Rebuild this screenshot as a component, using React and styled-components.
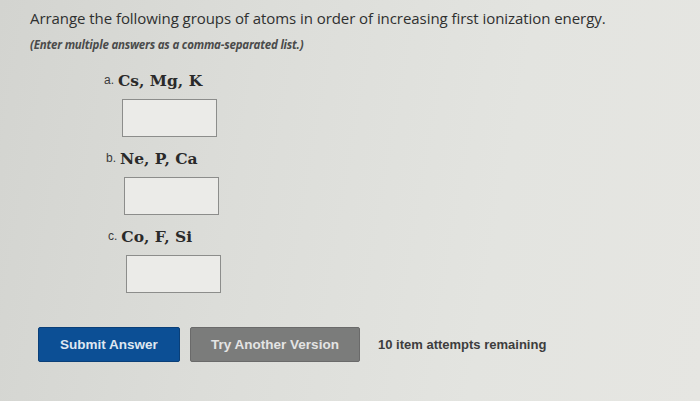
import styled, { createGlobalStyle } from "styled-components";

const Global = createGlobalStyle`
html, body {
  margin: 0;
  padding: 0;
}
body {
  width: 700px;
  height: 401px;
  overflow: hidden;
  background: linear-gradient(100deg, #d3d4d0 0%, #dcddd9 35%, #e3e4e0 70%, #e6e6e2 100%);
}
`;

const Container = styled.div`
width: 700px;
height: 401px;
box-sizing: border-box;
padding: 9px 0 0 30px;
display: flex;
flex-direction: column;
font-family: "Open Sans", "Liberation Sans", sans-serif;
`;

const Prompt = styled.p`
margin: 0;
font-size: 15px;
line-height: 18px;
color: #2f3030;
letter-spacing: -0.06px;
`;

const Note = styled.p`
margin: 10px 0 0 0;
font-size: 11.5px;
line-height: 16px;
font-weight: 700;
font-style: italic;
color: #4a4b4b;
letter-spacing: -0.2px;
`;

const Items = styled.div`
margin: 17px 0 0 74px;
display: flex;
flex-direction: column;
gap: 11px;
`;

const Item = styled.div`
display: flex;
flex-direction: column;
gap: 9px;
padding-left: ${props => props.shift}px;
`;

const Label = styled.div`
height: 20px;
display: flex;
align-items: center;
gap: 4px;
color: #2a2a2a;
`;

const Letter = styled.span`
font-family: "Liberation Sans", sans-serif;
font-size: 12px;
color: #3a3a3a;
`;

const Elements = styled.span`
font-family: "DejaVu Serif", "Liberation Serif", serif;
font-size: 15.5px;
font-weight: 700;
`;

const AnswerBox = styled.input`
margin-left: 18px;
width: 95px;
height: 38px;
box-sizing: border-box;
border: 1.5px solid #8c8d8b;
background: #ebebe8;
outline: none;
`;

const Actions = styled.div`
margin: 34px 0 0 8px;
display: flex;
align-items: center;
gap: 10px;
`;

const Button = styled.button`
height: 35px;
width: ${props => props.width}px;
box-sizing: border-box;
border-radius: 2px;
border: 1px solid ${props => props.primary ? '#0a3f78' : '#6a6a6a'};
background: ${props => props.primary ? '#0c4f95' : '#7b7c7b'};
color: ${props => props.primary ? '#dfe7f1' : '#e4e4e4'};
font-family: "Liberation Sans", sans-serif;
font-size: 13.5px;
font-weight: 700;
padding: 0;
`;

const Remaining = styled.span`
margin-left: 8px;
font-family: "Liberation Sans", sans-serif;
font-size: 13px;
font-weight: 700;
color: #3d3d3d;
`;

const items = [
    { letter: 'a.', text: 'Cs, Mg, K', shift: 0 },
    { letter: 'b.', text: 'Ne, P, Ca', shift: 2 },
    { letter: 'c.', text: 'Co, F, Si', shift: 4 },
];

const App = () => {
    return (
        <>
            <Global />
            <Container>
                <Prompt>
                    Arrange the following groups of atoms in order of increasing first ionization energy.
                </Prompt>
                <Note>(Enter multiple answers as a comma-separated list.)</Note>
                <Items>
                    {items.map(item => (
                        <Item key={item.letter} shift={item.shift}>
                            <Label>
                                <Letter>{item.letter}</Letter>
                                <Elements>{item.text}</Elements>
                            </Label>
                            <AnswerBox type="text" />
                        </Item>
                    ))}
                </Items>
                <Actions>
                    <Button primary width={142}>Submit Answer</Button>
                    <Button width={170}>Try Another Version</Button>
                    <Remaining>10 item attempts remaining</Remaining>
                </Actions>
            </Container>
        </>
    );
}

export default App;
